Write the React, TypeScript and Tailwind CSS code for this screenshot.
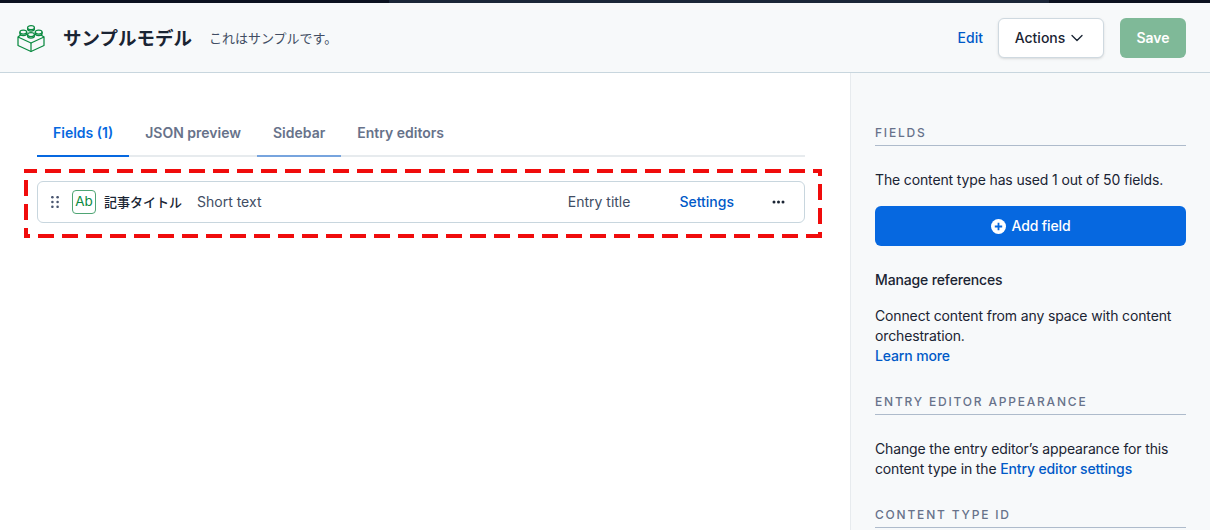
import React from "react";
import { ChevronDown } from "lucide-react";

const font = "[font-family:Inter,'Noto_Sans_CJK_JP',sans-serif]";

function LegoIcon() {
  return (
    <svg width="30" height="30" viewBox="0 0 30 30" fill="none" stroke="#0b8a41" strokeWidth="1.25" strokeLinejoin="round">
      <path d="M2 14 L15 20 L28 14 V22.5 L15 28.5 L2 22.5 Z" />
      <path d="M15 20 V28.5" />
      <path d="M2 14 L7 10 M28 14 L22 10" />
      <path d="M3.9 9 V10.5 C3.9 11.6 5.4 12.5 7.3 12.5 C9.2 12.5 10.7 11.6 10.7 10.5 V9" fill="#f7f9fa" />
      <path d="M19.3 9 V10.5 C19.3 11.6 20.8 12.5 22.7 12.5 C24.6 12.5 26.1 11.6 26.1 10.5 V9" fill="#f7f9fa" />
      <ellipse cx="7.3" cy="9" rx="3.4" ry="2" fill="#f7f9fa" />
      <ellipse cx="22.7" cy="9" rx="3.4" ry="2" fill="#f7f9fa" />
      <path d="M11.6 4.7 V6 C11.6 7.1 13.1 8 15 8 C16.9 8 18.4 7.1 18.4 6 V4.7" fill="#f7f9fa" />
      <ellipse cx="15" cy="4.7" rx="3.4" ry="2" fill="#f7f9fa" />
      <path d="M11.6 11.5 V13 C11.6 14.1 13.1 15 15 15 C16.9 15 18.4 14.1 18.4 13 V11.5" fill="#f7f9fa" />
      <ellipse cx="15" cy="11.5" rx="3.4" ry="2" fill="#f7f9fa" />
    </svg>
  );
}

function DragHandle() {
  return (
    <svg width="8" height="12" viewBox="0 0 8 12" fill="#4a5670">
      {[1.2, 6, 10.8].map((y) => (
        <React.Fragment key={y}>
          <circle cx="1.4" cy={y} r="1.3" />
          <circle cx="6.6" cy={y} r="1.3" />
        </React.Fragment>
      ))}
    </svg>
  );
}

function SectionHeading({ children }: { children: React.ReactNode }) {
  return (
    <div className="border-b border-[#aebbcb] pb-[3px] text-xs font-medium leading-[18px] tracking-[0.15em] text-[#67728a]">
      {children}
    </div>
  );
}

function Tab({ label, className }: { label: string; className: string }) {
  return (
    <div className={`-mb-[2px] border-b-2 px-4 pb-3 text-sm font-semibold leading-5 ${className}`}>{label}</div>
  );
}

export default function App() {
  return (
    <div className={`flex h-[530px] w-[1210px] flex-col overflow-hidden bg-white text-[#1a2433] ${font}`}>
      <div className="flex h-[3px] shrink-0">
        <div className="w-[271px] bg-[#0b1220]" />
        <div className="w-[118px] bg-[#0b1220]" />
        <div className="w-[660px] bg-[#1a2638]" />
        <div className="flex-1 bg-[#0b1220]" />
      </div>
      <header className="flex h-[70px] shrink-0 items-center border-b border-[#c8d6de] bg-[#f7f9fa] pl-4 pr-6">
        <LegoIcon />
        <h1 className="ml-[17px] mt-[1px] text-[18.5px] font-semibold leading-7 text-[#1a2433]">サンプルモデル</h1>
        <p className="ml-[17px] mt-[1px] text-[13px] leading-5 text-[#414d63]">これはサンプルです。</p>
        <div className="ml-auto flex items-center">
          <span className="mt-[1px] text-sm font-medium text-[#0059c8]">Edit</span>
          <button className="ml-[15px] flex h-10 w-[106px] items-center justify-center gap-[2px] rounded-md border border-[#cfd9e0] bg-white text-sm font-medium text-[#1a2433] shadow-sm">
            Actions
            <ChevronDown size={20} strokeWidth={1.6} />
          </button>
          <button className="ml-4 h-10 w-[66px] rounded-md bg-[#7fb998] text-sm font-semibold text-white">Save</button>
        </div>
      </header>
      <div className="flex min-h-0 flex-1">
        <main className="w-[850px] flex-none pl-[37px] pt-[50px]">
          <div className="w-[768px]">
            <div className="flex border-b-2 border-[#e7ebee]">
              <Tab label="Fields (1)" className="border-[#0668e0] text-[#0668e0]" />
              <Tab label="JSON preview" className="border-transparent text-[#67728a]" />
              <Tab label="Sidebar" className="border-[#77a4de] text-[#67728a]" />
              <Tab label="Entry editors" className="border-transparent text-[#67728a]" />
            </div>
            <div className="relative mt-6">
              <div className="flex h-[42px] items-center rounded-md border border-[#c8d6de] bg-white text-sm">
                <div className="ml-[13px] flex w-[8px] justify-center">
                  <DragHandle />
                </div>
                <span className="ml-[13px] flex h-6 w-6 items-center justify-center rounded border border-[#4fa574] text-[13.5px] leading-none text-[#0b8a41]">
                  Ab
                </span>
                <span className="ml-2 text-[13px] font-medium text-[#1a2433]">記事タイトル</span>
                <span className="ml-[15px] text-[#414d63]">Short text</span>
                <span className="ml-auto text-[#414d63]">Entry title</span>
                <span className="ml-[49px] font-medium text-[#0059c8]">Settings</span>
                <svg className="ml-[38px] mr-[19px]" width="13" height="4" viewBox="0 0 13 4" fill="#1a2433">
                  <circle cx="2" cy="2" r="1.5" />
                  <circle cx="6.5" cy="2" r="1.5" />
                  <circle cx="11" cy="2" r="1.5" />
                </svg>
              </div>
              <svg className="pointer-events-none absolute -left-[13px] -top-[12px]" width="798" height="69" viewBox="0 0 798 69" fill="none" stroke="#f00c0c" strokeWidth="4" strokeDasharray="16 8">
                <path d="M0 2 H798" strokeDashoffset="3" />
                <path d="M796 0 V69" strokeDashoffset="9" />
                <path d="M798 67 H0" />
                <path d="M2 69 V0" strokeDashoffset="6" />
              </svg>
            </div>
          </div>
        </main>
        <aside className="flex-1 border-l border-[#e7ebee] bg-[#f7f9fa] px-6 pt-[51px] text-sm leading-5 tracking-[-0.01em] text-[#1a2433]">
          <SectionHeading>FIELDS</SectionHeading>
          <p className="mt-6">The content type has used 1 out of 50 fields.</p>
          <button className="mt-4 flex h-10 w-full items-center justify-center gap-[6px] rounded-md bg-[#0668e0] font-medium text-white">
            <svg width="15" height="15" viewBox="0 0 15 15">
              <circle cx="7.5" cy="7.5" r="7.5" fill="#fff" />
              <path d="M7.5 3.8 V11.2 M3.8 7.5 H11.2" stroke="#0668e0" strokeWidth="1.8" />
            </svg>
            Add field
          </button>
          <h3 className="mt-6 font-medium">Manage references</h3>
          <p className="mt-4">
            Connect content from any space with content orchestration.
            <br />
            <span className="font-medium text-[#0059c8]">Learn more</span>
          </p>
          <div className="mt-[27px]">
            <SectionHeading>ENTRY EDITOR APPEARANCE</SectionHeading>
          </div>
          <p className="mt-6">
            Change the entry editor’s appearance for this content type in the{" "}
            <span className="font-medium text-[#0059c8]">Entry editor settings</span>
          </p>
          <div className="mt-[27px]">
            <SectionHeading>CONTENT TYPE ID</SectionHeading>
          </div>
        </aside>
      </div>
    </div>
  );
}
